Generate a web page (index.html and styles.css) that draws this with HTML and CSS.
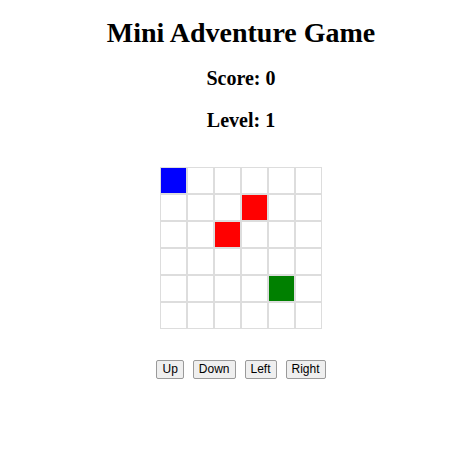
FILE: index.html
```html
<!DOCTYPE html>
<html>
<head>
<meta charset="utf-8">
<title>Mini Adventure Game</title>
<link rel="stylesheet" href="styles.css">
</head>
<body>
<div class="game">
  <h1 class="title">Mini Adventure Game</h1>
  <h2 class="stat">Score: 0</h2>
  <h2 class="stat">Level: 1</h2>
  <div class="board">
    <div class="cell player"></div><div class="cell"></div><div class="cell"></div><div class="cell"></div><div class="cell"></div><div class="cell"></div>
    <div class="cell"></div><div class="cell"></div><div class="cell"></div><div class="cell enemy"></div><div class="cell"></div><div class="cell"></div>
    <div class="cell"></div><div class="cell"></div><div class="cell enemy"></div><div class="cell"></div><div class="cell"></div><div class="cell"></div>
    <div class="cell"></div><div class="cell"></div><div class="cell"></div><div class="cell"></div><div class="cell"></div><div class="cell"></div>
    <div class="cell"></div><div class="cell"></div><div class="cell"></div><div class="cell"></div><div class="cell goal"></div><div class="cell"></div>
    <div class="cell"></div><div class="cell"></div><div class="cell"></div><div class="cell"></div><div class="cell"></div><div class="cell"></div>
  </div>
  <div class="controls">
    <button class="btn">Up</button>
    <button class="btn">Down</button>
    <button class="btn">Left</button>
    <button class="btn">Right</button>
  </div>
</div>
</body>
</html>
```
FILE: styles.css
```css
html, body {
  margin: 0;
  padding: 0;
  background: #fff;
}
body {
  font-family: "Liberation Serif", "Times New Roman", serif;
  color: #000;
}
.game {
  display: flex;
  flex-direction: column;
  align-items: center;
  padding-left: 8px;
  padding-top: 17px;
}
.title {
  font-size: 28px;
  font-weight: bold;
  margin: 0;
  line-height: 32px;
}
.stat {
  font-size: 20px;
  font-weight: bold;
  margin: 0;
  line-height: 24px;
}
.title + .stat {
  margin-top: 17px;
}
.stat + .stat {
  margin-top: 18px;
}
.board {
  margin-top: 35px;
  display: grid;
  grid-template-columns: repeat(6, 27px);
  grid-auto-rows: 27px;
}
.cell {
  box-sizing: border-box;
  border: 1px solid #ddd;
  background: #fff;
}
.player { background: #0000ff; }
.enemy { background: #ff0000; }
.goal { background: #008000; }
.controls {
  margin-top: 31px;
  display: flex;
  gap: 9px;
}
.btn {
  font-family: "Liberation Sans", Arial, sans-serif;
  font-size: 12px;
  line-height: 15px;
  height: 19px;
  padding: 1px 5px;
  margin: 0;
  background: #efefef;
  border: 1px solid #9a9a9a;
  border-radius: 2px;
  color: #000;
  box-sizing: border-box;
}
```
